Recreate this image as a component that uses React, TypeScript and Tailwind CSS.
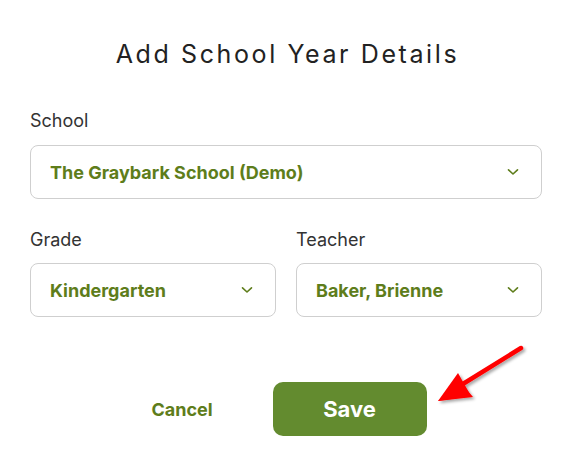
import React from "react";

function Chevron() {
  return (
    <svg width="12" height="8" viewBox="0 0 12 8" fill="none" className="shrink-0">
      <path d="M1.5 1.8 L6 6 L10.5 1.8" stroke="#5e7d1b" strokeWidth="1.6" strokeLinecap="round" strokeLinejoin="round" />
    </svg>
  );
}

function Select({ value }: { value: string }) {
  return (
    <div className="flex h-[54px] items-center justify-between rounded-[8px] border border-[#cfcfcf] bg-white pl-[19px] pr-[22px]">
      <span className="text-[18px] font-bold text-[#5e7d1b]">{value}</span>
      <Chevron />
    </div>
  );
}

export default function App() {
  return (
    <div
      className="relative h-[467px] w-[572px] overflow-hidden bg-white px-[30px] pt-[36px]"
      style={{ fontFamily: "Inter, 'Noto Sans', sans-serif" }}
    >
      <h1 className="pl-[3px] text-center text-[25px] font-normal leading-[36px] tracking-[2.6px] text-[#222]">
        Add School Year Details
      </h1>
      <div className="mt-[37px]">
        <div className="mb-[12px] text-[18px] leading-[24px] text-[#333]">School</div>
        <Select value="The Graybark School (Demo)" />
      </div>
      <div className="mt-[29px] grid grid-cols-2 gap-[20px]">
        <div>
          <div className="mb-[11px] text-[18px] leading-[24px] text-[#333]">Grade</div>
          <Select value="Kindergarten" />
        </div>
        <div>
          <div className="mb-[11px] text-[18px] leading-[24px] text-[#333]">Teacher</div>
          <Select value="Baker, Brienne" />
        </div>
      </div>
      <div className="mt-[65px] flex items-center justify-center gap-[60px] pl-[6px]">
        <button className="text-[18px] font-bold text-[#5e7d1b]">Cancel</button>
        <button className="h-[54px] w-[154px] rounded-[10px] bg-[#638b2f] text-[22px] font-bold text-white">
          Save
        </button>
      </div>
      <svg
        className="absolute left-0 top-0"
        width="572"
        height="467"
        viewBox="0 0 572 467"
        style={{ pointerEvents: "none" }}
      >
        <defs>
          <filter id="sh" x="-20%" y="-20%" width="140%" height="140%">
            <feDropShadow dx="2" dy="2" stdDeviation="1.5" floodColor="#000" floodOpacity="0.35" />
          </filter>
        </defs>
        <g filter="url(#sh)">
          <line x1="521" y1="348" x2="458" y2="387" stroke="#ff0000" strokeWidth="4.5" strokeLinecap="round" />
          <polygon points="438,401 461,383 473,397" fill="#ff0000" />
          <polygon points="438,401 458,373 471,396" fill="#ff0000" />
        </g>
      </svg>
    </div>
  );
}
